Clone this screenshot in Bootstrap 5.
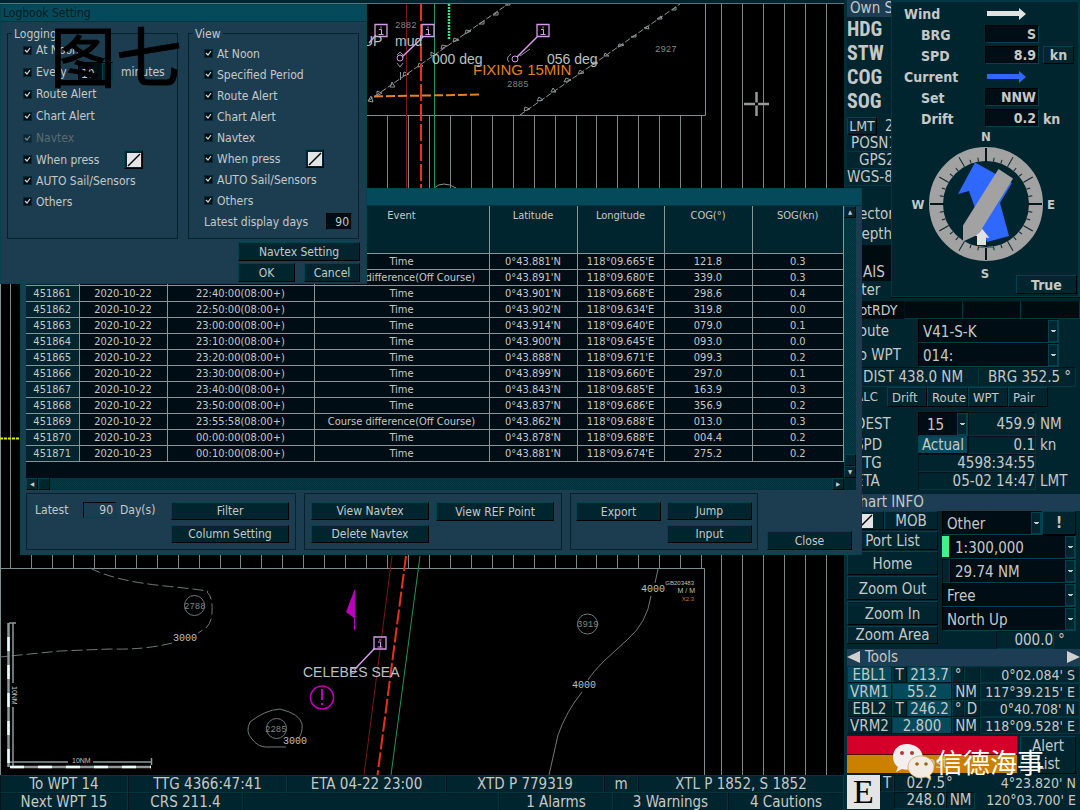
<!DOCTYPE html>
<html lang="en">
<head>
<meta charset="utf-8">
<meta name="viewport" content="width=device-width, initial-scale=1">
<title>ECDIS Logbook</title>
<link href="https://cdn.jsdelivr.net/npm/bootstrap@5.3.0/dist/css/bootstrap.min.css" rel="stylesheet">
<script src="https://cdn.jsdelivr.net/npm/bootstrap@5.3.0/dist/js/bootstrap.bundle.min.js"></script>
<style>
:root{--deep:#00252e;--win:#1c3d50;--teal:#054a5a;--hi:#00424f;--lo:#000a10;--ink:#c6c8c8;--well:#000d14}
body{background:#000;color:var(--ink);font:12px/16px "DejaVu Sans Condensed","DejaVu Sans",sans-serif}
.screen{height:100vh;min-height:810px;overflow:hidden}
.chart{background:#000;border-top:1px solid #55777c;margin-top:3px}
.chart svg{inset:0}
.topstrip{background:var(--deep)}
.key{background:var(--deep);color:var(--ink);border:1px solid;border-color:var(--hi) #000 #000 var(--hi);border-radius:0;padding:0;font:inherit;line-height:16px;text-align:center}
.win{background:var(--win);border:1px solid #004450}
.win-title{background:var(--teal);border-bottom:1px solid #003640;height:17px;line-height:16px}
.well{background:var(--well);color:var(--ink);border:1px solid;border-color:#000 var(--hi) var(--hi) #000;border-radius:0;padding:0 2px;font:inherit;text-align:right;min-width:0}
.lined{border:1px solid #03222d}
/* drop-down with its small arrow key */
.pick{position:relative;display:flex;min-width:0}
.pick select{appearance:none;width:100%;height:100%;background:var(--well);color:var(--ink);border:1px solid;border-color:#000 var(--hi) var(--hi) #000;padding:0 12px 0 4px;font:inherit;border-radius:0}
.pick::after{content:"";position:absolute;right:1px;top:1px;bottom:1px;width:10px;background:linear-gradient(var(--ink),var(--ink)) 3px 50%/3px 1px no-repeat,linear-gradient(var(--ink),var(--ink)) 2px calc(50% - 1px)/5px 1px no-repeat,var(--deep);border:1px solid var(--hi);pointer-events:none}
/* status bar */
.status{background:var(--deep);font-size:15px;line-height:17px}
.status .r1{display:grid;grid-template-columns:128fr 159fr 159fr 158fr 34fr 206fr;height:17px}
.status .r2{display:grid;grid-template-columns:128fr 115fr 256fr 114fr 115fr 116fr;height:18px}
.status .r1>*,.status .r2>*{border:1px solid;border-color:#003743 #003743 #001a22 #00141a;text-align:center;line-height:17px;white-space:nowrap}
.status .r2>*{line-height:18px}
/* own-ship column */
.side{flex:0 0 236px;background:var(--deep);font-size:15px;line-height:17px;border-left:3px solid #002d36;white-space:nowrap;overflow:hidden}
.side .head{background:#1c3d54;height:17px;padding-left:3px}
.side .big{font:bold 20px/24px "Liberation Sans Narrow","Roboto Condensed","Liberation Sans",sans-serif;height:24px}
.cell17{height:17px;border-bottom:1px solid #003743}
.cell18{height:18px;line-height:18px}
.cell20{height:20px;line-height:19px}
.row24{height:24px;line-height:24px}
.dark{background:#000b10}
.on{background:var(--teal)}
.boxed{border:1px solid;border-color:#001318 #003743 #003743 #001318}
.boxed.text-end{line-height:17px}
.name71{width:71px;padding-left:8px}
.tabkey{border:1px solid;border-color:var(--hi) #000 #000 var(--hi);background:var(--deep);color:var(--ink);font-size:13px;line-height:17px;padding:0 4px;text-align:left}
.tools{display:grid;grid-template-columns:45px 15px 45px 12px 16px minmax(0,1fr);grid-auto-rows:17px;line-height:16px}
.tools>*{border:1px solid;border-color:#003743 #00141a #00141a #003743;text-align:center}
.tools .pos{border-color:#003743;text-align:right;padding-right:4px}
.pos{font-size:14px;text-align:right;padding-right:4px}
.ends{display:grid;grid-template-columns:33px 14px 52px 29px minmax(0,1fr);grid-template-rows:17px 17px;margin-top:1px}
.ends .boxed{line-height:15px}
/* log window */
.logwin{top:188px;left:20px;right:218px;padding:0 5px 4px}
.logwin .win-title{margin:0 -5px}
.grid-log{width:100%;table-layout:fixed;border-collapse:collapse;font-size:11px;line-height:14px;text-align:center;color:var(--ink)}
.grid-log th{font-weight:400;height:47px;vertical-align:top;padding:3px 0 0;background:var(--deep)}
.grid-log td{height:16px;padding:1px 0 0;line-height:14px;white-space:nowrap;overflow:hidden}
.grid-log td,.grid-log th{border:1px solid #889596}
.grid-log thead th{border-top:0}
.grid-log tr>:first-child{border-left:0;background:var(--deep)}
.track{background:repeating-conic-gradient(#003a45 0 25%,#00323d 0 50%) 0 0/2px 2px}
.knob{width:12px;height:12px;line-height:8px;font-size:6px;flex:none}
.keyw{width:118px;height:19px}
.keyn{width:85px;height:19px}
/* logbook settings */
.setwin{top:4px;left:0;width:367px;height:280px}
.setwin .win-title{color:#001c22;font-size:12px;padding-left:2px}
.grp{position:relative;width:171px;height:206px;border:1px solid #03222d}
.grp legend{position:absolute;top:-8px;left:4px;width:auto;margin:0;padding:0 2px;font-size:12px;line-height:16px;background:var(--win)}
.opt{display:flex;align-items:center;white-space:nowrap}
.opt input[type=checkbox]{appearance:none;width:9px;height:9px;margin:0 4px 0 0;background:#000d14;border:1px solid #002a34;flex:none;background-image:url("data:image/svg+xml,%3Csvg xmlns='http://www.w3.org/2000/svg' viewBox='0 0 7 7'%3E%3Cpath d='M1 3l2 2 3-4' fill='none' stroke='%23d8d8d8' stroke-width='1.2'/%3E%3C/svg%3E")}
.opt input:disabled{opacity:.5}
.opt input:disabled+label{color:#5f6a6c}
.logrows{display:grid;grid-template-rows:repeat(5,22px) repeat(3,21px)}
.viewrows{display:grid;grid-template-rows:repeat(9,21px)}
.pen{width:19px;height:19px;line-height:0}
.stamp{left:50px;top:17px;font:400 66px/72px "Noto Sans CJK SC",sans-serif;color:#000;-webkit-text-stroke:1px #000}
/* wind and current */
.wind{top:0;right:0;width:189px;height:297px;background:var(--deep);border:1px solid #003743;border-width:2px 2px 1px 1px;box-shadow:0 1px 0 #000;font-weight:700;font-size:14px}
.windgrid{display:grid;grid-template-columns:92px 54px 36px;grid-auto-rows:20px;row-gap:1px;line-height:20px;padding:2px 0 0 1px}
.windgrid .ind{padding-left:28px}.windgrid .top{padding-left:11px}
.windgrid .well{height:18px}
.brand{right:36px;bottom:28px;color:#fff;font:400 27px/40px "Noto Sans CJK SC",sans-serif}
</style>
</head>
<body>
<div class="screen d-flex position-relative">
 <main class="d-flex flex-column flex-grow-1 topstrip" style="min-width:0">
  <div class="chart position-relative flex-grow-1">
   <svg class="position-absolute w-100 h-100" viewBox="0 4 844 771" preserveAspectRatio="xMinYMin slice" font-family="Liberation Sans,sans-serif" fill="none">
    <path stroke="#7a8787" d="M387.5 116V568M408.5 116V568M429.5 116V568M450.5 116V568M471.5 116V568M492.5 116V568M513.5 116V568M534.5 116V568M555.5 116V568M576.5 116V568M596.5 116V568M617.5 116V568M638.5 116V568M659.5 116V568M680.5 116V568M701.5 116V568M10.5 116V568M31.5 550V568M52.5 550V568M73.5 550V568M94.5 550V568M115.5 550V568M136.5 550V568M157.5 550V568M178.5 550V568M199.5 550V568M220.5 550V568M240.5 550V568M261.5 550V568M282.5 550V568M303.5 550V568M324.5 550V568M345.5 550V568M366.5 550V568M721.5 4V775M742.5 4V775M763.5 4V775M784.5 4V775M805.5 4V775M826.5 4V775"/>
    <path stroke="#7f8f8f" d="M.5 116V775M0 568.5H704.5V775M360 115.5H705.5V4"/>
    <!-- restricted area limits -->
    <g stroke="#8d9696">
     <path stroke-dasharray="6 2" d="M368 101L508 4M520 115L680 4"/>
     <path d="M368 101l3-5 2 6zM377 96l0-5 5 2zM390 87l2-5 3 5zM403 76l1-4 5 2zM418 67l1-4 4 3zM431 56l0-4 5 3zM441 49l1-4 5 1zM453 42l1-4 5 2zM465 34l1-4 5 1zM479 24l5-3 0 3zM493 15l5-3 0 3zM505 5l5 0 0-2M524 111l1-4 5 2zM537 101l2-4 4 3zM551 92l2-4 3 4zM564 82l2-4 5 2zM578 74l2-4 4 3zM592 65l1-3 5 1zM604 56l1-3 4 3zM618 47l1-3 5 1zM631 37l5-2 0 2zM644 28l4-2 1 3zM657 19l4-3 1 3zM672 10l4-3 0 3z"/>
     <path d="M397 55l3-3 3 3M397 63l3 4 3-4M400.5 72v8M509 62q-4-4 2-8M520 56l10-7M434 188q9-8 22 0"/>
    </g>
    <path stroke="#791610" d="M406.5 4V188M392 556L364 775"/>
    <path stroke="#e7301e" stroke-width="2" stroke-dasharray="17 3" d="M421 4V188"/>
    <path stroke="#e7301e" stroke-width="2" stroke-dasharray="15 3" d="M406 556L377.500 775"/>
    <path stroke="#229457" d="M434.500 4V188M420 556L391 775"/>
    <path stroke="#34e48b" stroke-width="2.500" stroke-dasharray="2 1" d="M449 4V40"/>
    <path stroke="#e8801e" stroke-width="2" stroke-dasharray="9 3" d="M374 96.500L479 94.500"/>
    <g stroke="#d69be8">
     <path stroke-width="1.500" d="M369 43l7-8M402 57l21-20M517 57l20-20M355 669l20-21"/>
     <circle cx="400" cy="58" r="3"/><circle cx="515" cy="59" r="3"/><circle cx="353" cy="671" r="2.500"/>
     <path stroke-width="1.300" d="M375 24.500h12v12h-12zM422 24.500h12v12h-12zM537 24.500h12v12h-12zM374 637h12v12h-12z"/>
     <path d="M379 29.500h2.500v5M378.500 34.500h5M381 26.500v2M426 29.500h2.500v5M425.500 34.500h5M428 26.500v2M541 29.500h2.500v5M540.500 34.500h5M543 26.500v2M378 642h2.500v5M377.500 647h5M380 639v2"/>
    </g>
    <g fill="#b9c2c0" font-size="14">
     <text x="363" y="46">UP</text><text x="395" y="46">mud</text><text x="432" y="64">000 deg</text><text x="547" y="64">056 deg</text><text x="303" y="677">CELEBES SEA</text>
    </g>
    <text x="473" y="75" fill="#e08220" font-size="15">FIXING 15MIN</text>
    <g fill="#7f8888" font-family="Liberation Mono,monospace" font-size="9">
     <text x="395" y="28">2882</text><text x="507" y="87">2885</text><text x="655" y="52">2927</text><text x="184" y="609">2788</text><text x="265" y="732">2285</text><text x="577" y="627">3919</text>
    </g>
    <g fill="#b9c2c2" font-family="Liberation Mono,monospace" font-size="10">
     <text x="173" y="641">3000</text><text x="283" y="744">3000</text><text x="641" y="592">4000</text><text x="572" y="688">4000</text>
    </g>
    <g font-size="7" fill="#b9c2c0"><text x="694" y="585" text-anchor="end" font-size="6">GB203483</text><text x="695" y="593" text-anchor="end">M / M</text><text x="694" y="601" text-anchor="end" fill="#d07a20" font-size="6">X2.3</text>
     <text x="72" y="763">10NM</text><text transform="translate(12 686) rotate(90)">10NM</text></g>
    <g stroke="#6f7979">
     <circle cx="194.500" cy="605.500" r="10"/><circle cx="276.500" cy="728.500" r="10"/><circle cx="587.500" cy="624" r="10"/>
     <path stroke-dasharray="11 4" d="M90 568Q115 581 165 586T207 592Q213 597 212 612Q212 622 206 628L198 633M172 643Q145 650 110 649L60 651L0 657"/>
     <path d="M280 709Q265 710 250 722Q245 732 252 739Q258 747 266 747H286M280 709Q300 714 302 724Q303 733 298 739"/>
     <path d="M658 569L655 583M651 596Q647 623 627 640L604 661Q593 672 588 680M582 692Q566 712 558 735L549 775"/>
    </g>
    <path fill="#bd00bd" d="M354 590v38h1v-38zM354 591L346 612l8 6z"/><path stroke="#bd00bd" d="M354.500 618v12"/>
    <circle cx="322" cy="697.500" r="11.500" stroke="#bd00bd" stroke-width="1.500"/><path stroke="#bd00bd" stroke-width="2" d="M322 689v11M322 703v2"/>
    <!-- scale bars -->
    <path stroke="#8f9b9b" stroke-width="1.500" d="M9 623h7M13 623v60M13 707v60M9 762h59M93 762h59M151.500 758v7"/>
    <path stroke="#8f9b9b" stroke-width="2.500" d="M8.500 623v144M10 767h141"/>
    <path stroke="#e6ffff" stroke-width="2.500" stroke-dasharray="14 14" d="M8.500 637v130M10 767h141"/>
    <path stroke="#e6e600" stroke-width="2" stroke-dasharray="3 1" d="M0 438.500h20"/>
    <path stroke="#999" stroke-width="2.500" d="M744 104h11M758 104h11M756.500 92v10.500M756.500 105.500v10.500"/>
   </svg>
  </div>
  <footer class="status">
   <div class="r1"><span>To WPT 14</span><span>TTG 4366:47:41</span><span>ETA 04-22 23:00</span><span>XTD P 779319</span><button class="key">m</button><span>XTL P 1852, S 1852</span></div>
   <div class="r2"><span>Next WPT 15</span><span>CRS 211.4</span><span></span><span>1 Alarms</span><span>3 Warnings</span><span>4 Cautions</span></div>
  </footer>
 </main>

 <aside class="side">
  <div class="head">Own Ship</div>
  <div class="big">HDG</div><div class="big">STW</div><div class="big">COG</div><div class="big">SOG</div>
  <div class="d-flex cell18 mt-1"><button class="key" style="width:30px;font-size:14px">LMT</button><span class="ps-2">20</span></div>
  <div class="cell17 ps-1">POSN1</div><div class="cell17 ps-2 ms-1">GPS2</div><div class="cell17">WGS-84</div>
  <div class="cell20" style="margin-top:19px;padding-left:4px">Vector</div>
  <div class="cell20" style="padding-left:4px">Depth</div>
  <div class="dark cell18"></div>
  <div class="dark cell18" style="padding-left:16px">AIS</div>
  <div class="cell20">Filter</div>
  <div class="dark cell18 d-flex"><span style="width:57px;padding-left:3px;font-size:14px">NotRDY</span><span class="boxed flex-fill"></span><span class="boxed flex-fill"></span><span class="boxed flex-fill"></span></div>
  <div class="d-flex row24"><label for="rt" style="width:71px;padding-left:3px">Route</label><div class="pick" style="width:141px"><select id="rt"><option>V41-S-K</option></select></div></div>
  <div class="d-flex row24"><label for="wp" style="width:71px;padding-left:6px">To WPT</label><div class="pick" style="width:141px"><select id="wp"><option>014:</option></select></div></div>
  <div class="d-flex cell20 me-1"><span class="boxed" style="width:132px;padding-left:15px">DIST 438.0 NM</span><span class="boxed flex-fill ps-2">BRG 352.5 °</span></div>
  <div class="d-flex cell20"><span class="flex-shrink-0" style="width:40px;font-size:13px">CALC</span><button class="tabkey" style="width:40px">Drift</button><button class="tabkey" style="width:41px">Route</button><button class="tabkey" style="width:40px">WPT</button><button class="tabkey" style="width:40px">Pair</button></div>
  <div class="me-1" style="padding-top:5px;height:87px">
   <div class="d-flex row24"><label for="de" class="name71">DEST</label><div class="pick" style="width:50px"><select id="de" class="ps-2"><option>15</option></select></div><span class="boxed text-end" style="width:68px;line-height:22px">459.9</span><span class="ps-1">NM</span></div>
   <div class="d-flex cell18"><span class="name71">SPD</span><button class="key on" style="width:50px">Actual</button><span class="boxed text-end" style="width:68px">0.1</span><span class="ps-1">kn</span></div>
   <div class="d-flex cell18"><span class="name71">TTG</span><span class="boxed text-end" style="width:118px">4598:34:55</span></div>
   <div class="d-flex cell18"><span class="name71">ETA</span><span class="boxed text-end" style="width:118px">05-02 14:47</span><span class="ps-1">LMT</span></div>
  </div>
  <div class="head">Chart INFO</div>
  <div class="d-flex" style="height:138px;gap:4px">
   <div class="d-flex flex-column" style="width:91px;gap:1px">
    <div class="d-flex" style="height:19px"><button class="key pen" aria-label="Pen" style="width:37px"><svg width="14" height="14" viewBox="0 0 14 14"><path fill="#e4e4e4" d="M0 0h14v14H0z"/><path stroke="#000" stroke-width="1.500" d="M1 13L13 1"/></svg></button><button class="key flex-fill">MOB</button></div>
    <button class="key" style="height:19px">Port List</button><button class="key row24">Home</button><button class="key row24">Zoom Out</button><button class="key row24">Zoom In</button><button class="key" style="height:18px">Zoom Area</button>
   </div>
   <div class="d-flex flex-column flex-fill me-1">
    <div class="d-flex row24"><div class="pick flex-fill"><select aria-label="Chart type"><option>Other</option></select></div><button class="key fw-bold" style="width:34px">!</button></div>
    <div class="d-flex row24"><span style="width:7px;background:#45ef8c;margin:1px 1px 2px 0"></span><div class="pick flex-fill"><select aria-label="Scale"><option>1:300,000</option></select></div></div>
    <div class="d-flex row24"><span class="boxed" style="width:8px"></span><div class="pick flex-fill"><select aria-label="Range"><option>29.74 NM</option></select></div></div>
    <div class="pick row24"><select aria-label="Motion"><option>Free</option></select></div>
    <div class="pick row24"><select aria-label="Orientation"><option>North Up</option></select></div>
    <div class="d-flex justify-content-end cell18"><span class="boxed text-end" style="width:58px">000.0</span><span style="width:22px;padding-left:4px">°</span></div>
   </div>
  </div>
  <div class="head d-flex align-items-center px-0"><svg width="14" height="13"><path fill="#d0d0d0" d="M13 0v12L0 6z"/></svg><span class="flex-fill ps-1">Tools</span><svg width="15" height="13"><path fill="#d0d0d0" d="M2 0v12l13-6z"/></svg></div>
  <div class="tools">
   <span class="on">EBL1</span><span>T</span><span class="on">213.7</span><span>°</span><span></span><span class="pos">0°02.084' S</span>
   <span class="on">VRM1</span><span class="on" style="grid-column:span 2">55.2</span><span style="grid-column:span 2">NM</span><span class="pos">117°39.215' E</span>
   <span>EBL2</span><span>T</span><span class="on">246.2</span><span>°</span><span>D</span><span class="pos">0°40.708' N</span>
   <span>VRM2</span><span class="on" style="grid-column:span 2">2.800</span><span style="grid-column:span 2">NM</span><span class="pos">118°09.528' E</span>
  </div>
  <div class="d-flex" style="height:38px;gap:3px;margin-top:2px">
   <div class="flex-fill"><div style="height:19px;background:#d4002a;border-bottom:1px solid #500"></div><div style="height:18px;background:#cb8000;padding-left:73px">Lost</div></div>
   <button class="key me-1" style="width:56px;line-height:18px">Alert<br>List</button>
  </div>
  <div class="ends">
   <div style="grid-row:span 2;background:#e4e4e4;color:#000;font:34px/34px 'Liberation Serif',serif;text-align:center">E</div>
   <span class="boxed text-center">T</span><span class="boxed text-end">027.5</span><span>°</span><span class="pos">4°23.820' N</span>
   <span></span><span class="boxed text-end">248.0</span><span class="boxed text-center">NM</span><span class="pos">120°03.700' E</span>
  </div>
 </aside>

 <section class="win logwin position-absolute">
  <div class="win-title"></div>
  <div class="d-flex" style="background:var(--well)">
   <div class="flex-grow-1" style="height:272px">
    <table class="grid-log">
     <colgroup><col style="width:53px"><col style="width:88px"><col style="width:147px"><col style="width:175px"><col style="width:88px"><col style="width:87px"><col style="width:88px"><col></colgroup>
     <thead><tr><th></th><th></th><th></th><th>Event</th><th>Latitude</th><th>Longitude</th><th>COG(°)</th><th>SOG(kn)</th></tr></thead>
     <tbody>
      <tr><td></td><td></td><td></td><td>Time</td><td>0°43.881'N</td><td>118°09.665'E</td><td>121.8</td><td>0.3</td></tr>
      <tr><td></td><td></td><td></td><td>Course difference(Off Course)</td><td>0°43.891'N</td><td>118°09.680'E</td><td>339.0</td><td>0.3</td></tr>
      <tr><td>451861</td><td>2020-10-22</td><td>22:40:00(08:00+)</td><td>Time</td><td>0°43.901'N</td><td>118°09.668'E</td><td>298.6</td><td>0.4</td></tr>
      <tr><td>451862</td><td>2020-10-22</td><td>22:50:00(08:00+)</td><td>Time</td><td>0°43.902'N</td><td>118°09.634'E</td><td>319.8</td><td>0.0</td></tr>
      <tr><td>451863</td><td>2020-10-22</td><td>23:00:00(08:00+)</td><td>Time</td><td>0°43.914'N</td><td>118°09.640'E</td><td>079.0</td><td>0.1</td></tr>
      <tr><td>451864</td><td>2020-10-22</td><td>23:10:00(08:00+)</td><td>Time</td><td>0°43.900'N</td><td>118°09.645'E</td><td>093.0</td><td>0.0</td></tr>
      <tr><td>451865</td><td>2020-10-22</td><td>23:20:00(08:00+)</td><td>Time</td><td>0°43.888'N</td><td>118°09.671'E</td><td>099.3</td><td>0.2</td></tr>
      <tr><td>451866</td><td>2020-10-22</td><td>23:30:00(08:00+)</td><td>Time</td><td>0°43.899'N</td><td>118°09.660'E</td><td>297.0</td><td>0.1</td></tr>
      <tr><td>451867</td><td>2020-10-22</td><td>23:40:00(08:00+)</td><td>Time</td><td>0°43.843'N</td><td>118°09.685'E</td><td>163.9</td><td>0.3</td></tr>
      <tr><td>451868</td><td>2020-10-22</td><td>23:50:00(08:00+)</td><td>Time</td><td>0°43.837'N</td><td>118°09.686'E</td><td>356.9</td><td>0.2</td></tr>
      <tr><td>451869</td><td>2020-10-22</td><td>23:55:58(08:00+)</td><td>Course difference(Off Course)</td><td>0°43.862'N</td><td>118°09.688'E</td><td>013.0</td><td>0.3</td></tr>
      <tr><td>451870</td><td>2020-10-23</td><td>00:00:00(08:00+)</td><td>Time</td><td>0°43.878'N</td><td>118°09.688'E</td><td>004.4</td><td>0.2</td></tr>
      <tr><td>451871</td><td>2020-10-23</td><td>00:10:00(08:00+)</td><td>Time</td><td>0°43.881'N</td><td>118°09.674'E</td><td>275.2</td><td>0.2</td></tr>
     </tbody>
    </table>
   </div>
   <div class="track d-flex flex-column" style="width:12px"><button class="key knob" aria-label="Up">▲</button><span class="flex-fill"></span><span class="key knob"></span><button class="key knob" aria-label="Down">▼</button></div>
  </div>
  <div class="track d-flex" style="height:12px"><button class="key knob" aria-label="Left">◀</button><span class="key knob"></span><span class="flex-fill"></span><button class="key knob" aria-label="Right">▶</button><span class="knob" style="background:var(--deep)"></span></div>
  <div class="d-flex" style="gap:8px;height:57px;margin-top:3px">
   <div class="lined d-flex flex-shrink-0" style="width:270px;padding:8px 6px 8px 8px">
    <label for="days" style="width:48px">Latest</label><input id="days" class="well" value="90" style="width:33px;height:16px;background:var(--win)"><span class="ps-1 flex-fill">Day(s)</span>
    <div class="d-flex flex-column" style="gap:5px"><button class="key keyw">Filter</button><button class="key keyw">Column Setting</button></div>
   </div>
   <div class="lined d-flex flex-shrink-0" style="width:258px;gap:7px;padding:8px 6px">
    <div class="d-flex flex-column" style="gap:5px"><button class="key keyw">View Navtex</button><button class="key keyw">Delete Navtex</button></div><button class="key keyw">View REF Point</button>
   </div>
   <div class="lined d-flex flex-shrink-0" style="width:188px;gap:6px;padding:8px 5px">
    <button class="key keyn">Export</button><div class="d-flex flex-column" style="gap:5px"><button class="key keyn">Jump</button><button class="key keyn">Input</button></div>
   </div>
   <button class="key keyn ms-auto align-self-end me-1">Close</button>
  </div>
 </section>

 <section class="win setwin position-absolute">
  <div class="win-title">Logbook Setting</div>
  <div class="d-flex" style="gap:10px;padding:11px 6px 0">
   <fieldset class="grp" style="padding:5px 0 0 15px"><legend>Logging</legend><div class="logrows">
    <div class="opt"><input type="checkbox" id="a1" checked><label for="a1">At Noon</label></div>
    <div class="opt"><input type="checkbox" id="a2" checked><label for="a2" style="width:42px">Every</label><div class="pick" style="width:35px;height:20px"><select aria-label="Interval" style="padding:3px 12px 0 2px"><option>10</option></select></div><span class="ps-2">minutes</span></div>
    <div class="opt"><input type="checkbox" id="a3" checked><label for="a3">Route Alert</label></div>
    <div class="opt"><input type="checkbox" id="a4" checked><label for="a4">Chart Alert</label></div>
    <div class="opt"><input type="checkbox" id="a5" checked disabled><label for="a5">Navtex</label></div>
    <div class="opt"><input type="checkbox" id="a6" checked><label for="a6" style="width:88px">When press</label><button class="key pen" aria-label="Pen"><svg width="14" height="14" viewBox="0 0 14 14"><path fill="#e4e4e4" d="M0 0h14v14H0z"/><path stroke="#000" stroke-width="1.500" d="M1 13L13 1"/></svg></button></div>
    <div class="opt"><input type="checkbox" id="a7" checked><label for="a7">AUTO Sail/Sensors</label></div>
    <div class="opt"><input type="checkbox" id="a8" checked><label for="a8">Others</label></div>
   </div></fieldset>
   <fieldset class="grp" style="padding:9px 0 0 15px"><legend>View</legend><div class="viewrows">
    <div class="opt"><input type="checkbox" id="b1" checked><label for="b1">At Noon</label></div>
    <div class="opt"><input type="checkbox" id="b2" checked><label for="b2">Specified Period</label></div>
    <div class="opt"><input type="checkbox" id="b3" checked><label for="b3">Route Alert</label></div>
    <div class="opt"><input type="checkbox" id="b4" checked><label for="b4">Chart Alert</label></div>
    <div class="opt"><input type="checkbox" id="b5" checked><label for="b5">Navtex</label></div>
    <div class="opt"><input type="checkbox" id="b6" checked><label for="b6" style="width:88px">When press</label><button class="key pen" aria-label="Pen"><svg width="14" height="14" viewBox="0 0 14 14"><path fill="#e4e4e4" d="M0 0h14v14H0z"/><path stroke="#000" stroke-width="1.500" d="M1 13L13 1"/></svg></button></div>
    <div class="opt"><input type="checkbox" id="b7" checked><label for="b7">AUTO Sail/Sensors</label></div>
    <div class="opt"><input type="checkbox" id="b8" checked><label for="b8">Others</label></div>
    <div class="opt"><label for="ld" style="width:122px">Latest display days</label><input id="ld" class="well" value="90" style="width:26px;height:17px"></div>
   </div></fieldset>
  </div>
  <div class="d-flex flex-wrap justify-content-end" style="gap:2px 9px;padding:3px 6px 0"><button class="key" style="width:122px;height:19px;margin-left:200px">Navtex Setting</button><button class="key" style="width:57px;height:19px">OK</button><button class="key" style="width:56px;height:19px">Cancel</button></div>
 </section>
 <div class="stamp position-absolute" lang="zh">图七</div>

 <section class="wind position-absolute">
  <div class="windgrid">
   <span class="top">Wind</span><svg width="42" height="20"><path fill="#e2e2e2" d="M2 7h32V4l7 6-7 6v-4H2z"/></svg><span></span>
   <label for="w1" class="ind">BRG</label><input id="w1" class="well" value="S"><span></span>
   <label for="w2" class="ind">SPD</label><input id="w2" class="well" value="8.9"><button class="key ms-1" style="width:31px;height:18px">kn</button>
   <span class="top">Current</span><svg width="42" height="20"><path fill="#2f68ff" d="M2 7h32V4l7 6-7 6v-4H2z"/></svg><span></span>
   <label for="w3" class="ind">Set</label><input id="w3" class="well" value="NNW"><span></span>
   <label for="w4" class="ind">Drift</label><input id="w4" class="well" value="0.2"><span class="ps-1">kn</span>
  </div>
  <svg class="d-block" width="186" height="154" viewBox="892 130 186 154" fill="none">
   <circle cx="986" cy="205" r="50" stroke="#a2a2a2" stroke-width="14"/>
   <g stroke="#0b2329" id="ticks"></g>
   <path stroke="#05161a" stroke-width="2" d="M986 149v14M986 247v14M930 205h14M1028 205h14"/>
   <path fill="#2f68ff" d="M975 163.500L1012 184 1000 204l9 33-22 6-18-51-11 3z"/><path stroke="#2f68ff" d="M979 248.500h14"/>
   <path fill="#e2e2e2" d="M981.500 229l8 10-3.500-.5v7.500h-9V237l-4-1z"/>
   <path fill="#a2a2a2" d="M998.500 170l14.500 9.500L983 228q-2 6-8 9l-12 5.500v-16z"/>
   <g fill="#c6c8c8" font-size="13" font-weight="700" text-anchor="middle"><text x="986" y="142">N</text><text x="985" y="279">S</text><text x="918" y="210">W</text><text x="1051" y="210">E</text></g>
  </svg>
  <button class="key d-block ms-auto" style="width:61px;height:19px;margin:-8px 1px 0">True</button>
 </section>
 <div class="brand position-absolute d-flex align-items-center" lang="zh">
  <svg width="44" height="38" viewBox="0 0 44 38"><path fill="#f5eeee" d="M15 1C6 1 1 7 1 14c0 4 2 8 5 10l-2 5 6-3c3 1 6 1 9 0 8-1 12-6 12-12C30 6 23 1 15 1z"/><path fill="#f3ece2" stroke="#d3a060" stroke-width=".7" d="M29 13c-8 0-13 5-13 11s6 11 13 11l5-1 5 3-1-5c3-2 4-5 4-8 0-6-6-11-13-11z"/><g fill="#b33"><circle cx="10" cy="10" r="2"/><circle cx="20" cy="10" r="2"/></g><g fill="#96690f"><circle cx="25" cy="21" r="1.800"/><circle cx="34" cy="21" r="1.800"/></g></svg><span>信德海事</span>
 </div>
</div>
<script>
// compass ring graduations every 10 degrees, longer every 30
const ticks = document.getElementById('ticks');
for (let a = 0; a < 360; a += 10) {
  const l = document.createElementNS('http://www.w3.org/2000/svg', 'line');
  l.setAttribute('x1', 986); l.setAttribute('x2', 986);
  l.setAttribute('y1', a % 30 ? 158 : 151); l.setAttribute('y2', 162);
  l.setAttribute('transform', `rotate(${a} 986 205)`);
  ticks.append(l);
}
</script>
</body>
</html>
